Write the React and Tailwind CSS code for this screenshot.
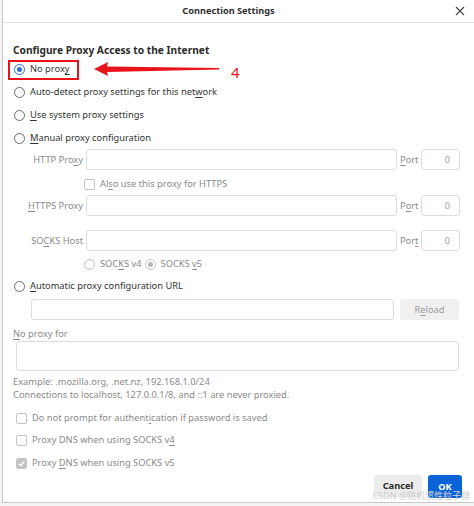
const font = { fontFamily: '"Noto Sans", "Open Sans", sans-serif' };

function U({ children }) {
  return <span className="underline underline-offset-2">{children}</span>;
}

function Radio({ checked, disabled }) {
  return (
    <span
      className={`flex h-[11px] w-[11px] shrink-0 items-center justify-center rounded-full border ${
        checked && !disabled ? "border-[#2f6ed3]" : disabled ? "border-[#c4c4c4]" : "border-[#6b6b6b]"
      } bg-white`}
    >
      {checked && (
        <span className={`h-[5px] w-[5px] rounded-full ${disabled ? "bg-[#b5b5b5]" : "bg-[#2f6ed3]"}`} />
      )}
    </span>
  );
}

function Check({ checked }) {
  return (
    <span className="flex h-[11px] w-[11px] shrink-0 items-center justify-center overflow-hidden rounded-[2px] border border-[#c4c4c4] bg-white">
      {checked && (
        <svg width="11" height="11" viewBox="0 0 10 10">
          <rect x="-1" y="-1" width="12" height="12" fill="#c4c4c4" />
          <path d="M2 5.2 L4.2 7.3 L8 2.8" stroke="#fff" strokeWidth="1.6" fill="none" />
        </svg>
      )}
    </span>
  );
}

function Input({ className, value }) {
  return (
    <div
      className={`flex h-[21px] items-center justify-end rounded-[3px] border border-[#dcdcdc] bg-white px-[9px] text-[9px] text-[#a0a0a0] ${className}`}
    >
      {value}
    </div>
  );
}

function ProxyRow({ label, port }) {
  return (
    <div className="flex items-center">
      <div className="w-[73px] pr-[3px] text-right text-[#8a8a8a]">{label}</div>
      <Input className="w-[311px]" />
      <div className="w-[24px] pl-[3px] text-[#8a8a8a]">{port}</div>
      <Input className="w-[39px]" value="0" />
    </div>
  );
}

export default function App() {
  return (
    <div className="relative h-[506px] w-[474px] overflow-hidden bg-[#f4f4f4] text-[9.3px] text-[#333]" style={font}>
      <div className="ml-[2px] flex h-[503px] flex-col border-l border-b border-[#c8c8c8] bg-white">
        <div className="relative flex h-[23px] shrink-0 items-center justify-center border-b border-[#e4e4e4] bg-white pr-[20px]">
          <span className="text-[9.2px] font-bold text-[#2e2e2e]">Connection Settings</span>
          <svg className="absolute right-[9px] top-[6px]" width="10" height="10" viewBox="0 0 10 10">
            <path d="M1 1 L9 9 M9 1 L1 9" stroke="#444" strokeWidth="1.1" />
          </svg>
        </div>

        <div className="flex flex-col px-[10px] pt-[20px]">
          <div className="text-[10.2px] font-bold text-[#2b2b2b]">Configure Proxy Access to the Internet</div>

          <div className="mt-[4px] flex h-[14px] items-center gap-[5px] pl-[1px]">
            <Radio checked />
            <span>No prox<U>y</U></span>
          </div>
          <div className="mt-[9px] flex h-[14px] items-center gap-[5px] pl-[1px]">
            <Radio />
            <span>Auto-detect proxy settings for this net<U>w</U>ork</span>
          </div>
          <div className="mt-[9px] flex h-[14px] items-center gap-[5px] pl-[1px]">
            <Radio />
            <span><U>U</U>se system proxy settings</span>
          </div>
          <div className="mt-[9px] flex h-[14px] items-center gap-[5px] pl-[1px]">
            <Radio />
            <span><U>M</U>anual proxy configuration</span>
          </div>

          <div className="mt-[4px] flex flex-col">
            <ProxyRow label={<>HTTP Pro<U>x</U>y</>} port={<><U>P</U>ort</>} />
            <div className="mt-[7px] flex h-[14px] items-center gap-[5px] pl-[71px] text-[#8a8a8a]">
              <Check />
              <span>Al<U>s</U>o use this proxy for HTTPS</span>
            </div>
            <div className="mt-[4px]">
              <ProxyRow label={<><U>H</U>TTPS Proxy</>} port={<>P<U>o</U>rt</>} />
            </div>
            <div className="mt-[14px]">
              <ProxyRow label={<>SO<U>C</U>KS Host</>} port={<>Por<U>t</U></>} />
            </div>
            <div className="mt-[6px] flex h-[14px] items-center pl-[71px] text-[#8a8a8a]">
              <Radio disabled />
              <span className="ml-[5px]">SOC<U>K</U>S v4</span>
              <span className="ml-[3px]"><Radio checked disabled /></span>
              <span className="ml-[5px]">SOCKS <U>v</U>5</span>
            </div>
          </div>

          <div className="mt-[8px] flex h-[14px] items-center gap-[5px] pl-[1px]">
            <Radio />
            <span><U>A</U>utomatic proxy configuration URL</span>
          </div>
          <div className="mt-[6px] flex items-center pl-[18px]">
            <Input className="w-[363px]" />
            <div className="ml-[6px] flex h-[21px] w-[59px] items-center justify-center rounded-[3px] bg-[#f0f0f0] text-[#9a9a9a]">
              R<U>e</U>load
            </div>
          </div>

          <div className="mt-[7px] text-[#8a8a8a]"><U>N</U>o proxy for</div>
          <div className="pl-[3px]">
            <div className="h-[30px] w-[443px] rounded-[3px] border border-[#dcdcdc] bg-white" />
          </div>
          <div className="mt-[4px] leading-[13px] text-[#8a8a8a]">
            <div>Example: .mozilla.org, .net.nz, 192.168.1.0/24</div>
            <div>Connections to localhost, 127.0.0.1/8, and ::1 are never proxied.</div>
          </div>

          <div className="mt-[10px] flex h-[14px] items-center gap-[5px] pl-[3px] text-[#8a8a8a]">
            <Check />
            <span>Do not prompt for authent<U>i</U>cation if password is saved</span>
          </div>
          <div className="mt-[8px] flex h-[14px] items-center gap-[5px] pl-[3px] text-[#8a8a8a]">
            <Check />
            <span>Proxy DNS when using SOCKS v<U>4</U></span>
          </div>
          <div className="mt-[9px] flex h-[14px] items-center gap-[5px] pl-[3px] text-[#8a8a8a]">
            <Check checked />
            <span>Proxy <U>D</U>NS when using SOCKS v5</span>
          </div>

          <div className="mt-[5px] flex justify-end gap-[6px] pr-[2px]">
            <div className="flex h-[22px] w-[48px] items-center justify-center rounded-[3px] bg-[#ececec] font-bold text-[#2b2b2b]">
              Cancel
            </div>
            <div className="flex h-[23px] w-[34px] items-center justify-center rounded-[3px] bg-[#0b63d8] font-bold text-white">
              OK
            </div>
          </div>
        </div>
      </div>

      {/* annotation */}
      <div className="absolute left-[8px] top-[60px] h-[20px] w-[71px] border-2 border-[#e8141c]" />
      <svg className="absolute left-[94px] top-[61px]" width="126" height="16" viewBox="0 0 126 16">
        <polygon points="0,8 14,1 13,5.5 125,7 125,8.5 13,11 14,15" fill="#e8141c" />
      </svg>
      <div className="absolute left-[231px] top-[62px] text-[15px] leading-[20px] text-[#e8141c]">4</div>

      <div
        className="absolute right-[4px] top-[489px] text-[9px] text-[#cfcfcf]"
        style={{ fontFamily: '"Noto Sans", "Noto Sans CJK SC", sans-serif' }}
      >
        CSDN @随机惯性粒子群
      </div>
    </div>
  );
}
